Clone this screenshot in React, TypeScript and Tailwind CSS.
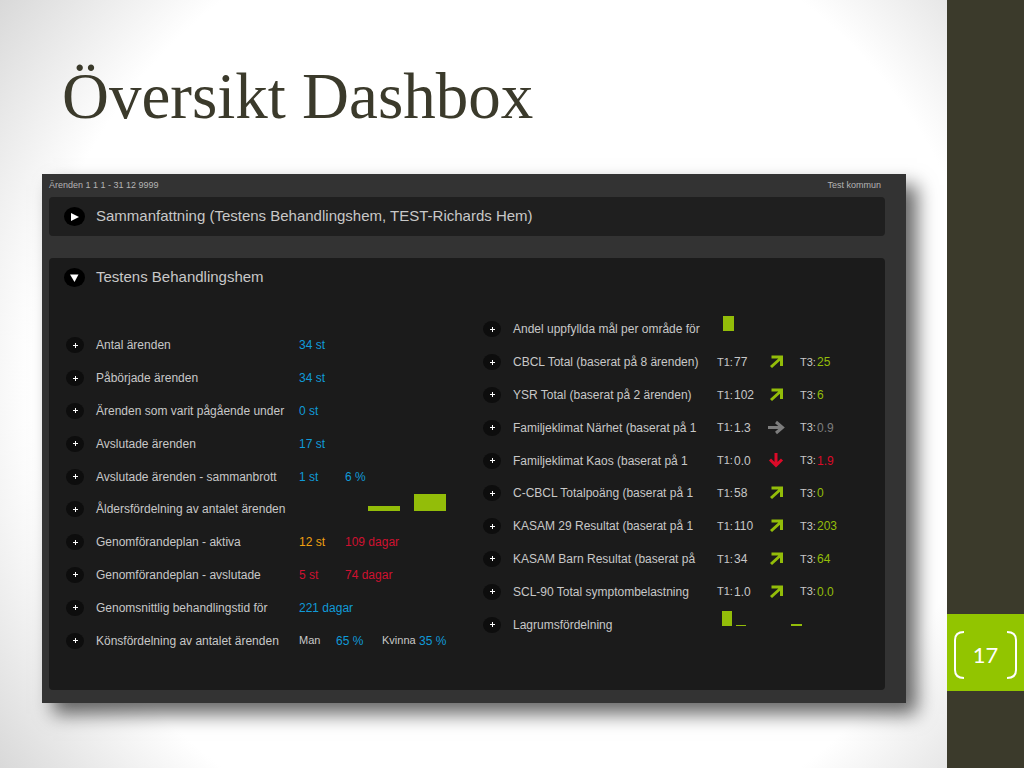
import { ReactNode } from "react";

type Value = {
  text: string;
  color: string;
};

type Stat = {
  label: string;
  values?: Value[];
  content?: ReactNode;
};

type Direction = "up" | "flat" | "down";

type Score = {
  label: string;
  t1?: string;
  t3?: string;
  direction?: Direction;
  content?: ReactNode;
};

const BLUE = "text-[#109ad8]";
const RED = "text-[#cf1130]";
const ORANGE = "text-[#f0a010]";

const stats: Stat[] = [
  { label: "Antal ärenden", values: [{ text: "34 st", color: BLUE }] },
  { label: "Påbörjade ärenden", values: [{ text: "34 st", color: BLUE }] },
  {
    label: "Ärenden som varit pågående under",
    values: [{ text: "0 st", color: BLUE }],
  },
  { label: "Avslutade ärenden", values: [{ text: "17 st", color: BLUE }] },
  {
    label: "Avslutade ärenden - sammanbrott",
    values: [
      { text: "1 st", color: BLUE },
      { text: "6 %", color: BLUE },
    ],
  },
  { label: "Åldersfördelning av antalet ärenden", content: <AgeChart /> },
  {
    label: "Genomförandeplan - aktiva",
    values: [
      { text: "12 st", color: ORANGE },
      { text: "109 dagar", color: RED },
    ],
  },
  {
    label: "Genomförandeplan - avslutade",
    values: [
      { text: "5 st", color: RED },
      { text: "74 dagar", color: RED },
    ],
  },
  {
    label: "Genomsnittlig behandlingstid för",
    values: [{ text: "221 dagar", color: BLUE }],
  },
  { label: "Könsfördelning av antalet ärenden", content: <GenderSplit /> },
];

const scores: Score[] = [
  { label: "Andel uppfyllda mål per område för", content: <GoalChart /> },
  { label: "CBCL Total (baserat på 8 ärenden)", t1: "77", t3: "25", direction: "up" },
  { label: "YSR Total (baserat på 2 ärenden)", t1: "102", t3: "6", direction: "up" },
  { label: "Familjeklimat Närhet (baserat på 1", t1: "1.3", t3: "0.9", direction: "flat" },
  { label: "Familjeklimat Kaos (baserat på 1", t1: "0.0", t3: "1.9", direction: "down" },
  { label: "C-CBCL Totalpoäng (baserat på 1", t1: "58", t3: "0", direction: "up" },
  { label: "KASAM 29 Resultat (baserat på 1", t1: "110", t3: "203", direction: "up" },
  { label: "KASAM Barn Resultat (baserat på", t1: "34", t3: "64", direction: "up" },
  { label: "SCL-90 Total symptombelastning", t1: "1.0", t3: "0.0", direction: "up" },
  { label: "Lagrumsfördelning", content: <LawChart /> },
];

const directionColor = {
  up: "text-[#93bd09]",
  flat: "text-[#7d7d7d]",
  down: "text-[#dc0a28]",
};

function AgeChart() {
  return (
    <svg className="ml-[69px] block" width="78" height="32" aria-hidden="true">
      <rect x="0" y="13" width="32" height="5" fill="#93bd09" />
      <rect x="46" y="1" width="32" height="17" fill="#93bd09" />
    </svg>
  );
}

function GoalChart() {
  return (
    <svg className="ml-[6px] block" width="12" height="32" aria-hidden="true">
      <rect x="0" y="3" width="11" height="15" fill="#93bd09" />
    </svg>
  );
}

function LawChart() {
  return (
    <svg className="ml-[5px] block" width="80" height="32" aria-hidden="true">
      <rect x="0" y="2" width="10" height="15" fill="#93bd09" />
      <rect x="14" y="16" width="10" height="1" fill="#93bd09" />
      <rect x="69" y="15" width="11" height="2" fill="#93bd09" />
    </svg>
  );
}

function GenderSplit() {
  return (
    <div className="flex items-center">
      <span className="w-[37px] text-[11px]">Man</span>
      <span className={`w-[46px] ${BLUE}`}>65 %</span>
      <span className="w-[37px] text-[11px]">Kvinna</span>
      <span className={BLUE}>35 %</span>
    </div>
  );
}

function TrendArrow({ direction }: { direction: Direction }) {
  return (
    <svg
      width="18"
      height="16"
      viewBox="0 0 18 16"
      fill="none"
      stroke="currentColor"
      strokeWidth="3"
      className={`block ${directionColor[direction]}`}
      aria-hidden="true"
    >
      {direction === "up" && <path d="M3 13 13 4M3.500 3H13.500V12" />}
      {direction === "flat" && <path d="M0 7.500h14M8 2 14.500 7.500 8 13" />}
      {direction === "down" && <path d="M8 0v12M2 6.500l6 6 6-6" />}
    </svg>
  );
}

function ExpandButton({ label }: { label: string }) {
  return (
    <button
      type="button"
      aria-label={`Visa ${label}`}
      className="flex h-4 w-[18px] items-center justify-center rounded-[50%] bg-[#0d0d0d]"
    >
      <svg width="5" height="5" viewBox="0 0 5 5" stroke="#fff" aria-hidden="true">
        <path d="M2.500 0v5M0 2.500h5" />
      </svg>
    </button>
  );
}

function SectionHeader({ title, open }: { title: string; open?: boolean }) {
  return (
    <button
      type="button"
      aria-expanded={!!open}
      className="flex h-[39px] items-center gap-[11px] pl-[15px] text-[15px] text-[#c8c8c8]"
    >
      <span className="flex h-[19px] w-[21px] items-center justify-center rounded-[50%] bg-black">
        <svg width="9" height="8" viewBox="0 0 9 8" fill="#fff" aria-hidden="true">
          {open ? <path d="M0 0.500h8.500L4.500 8z" /> : <path d="M1 0 9 4 1 8z" />}
        </svg>
      </span>
      {title}
    </button>
  );
}

function StatTable() {
  return (
    <table className="mt-8 h-[328px] w-full table-fixed text-left text-xs">
      <colgroup>
        <col className="w-[30px]" />
        <col className="w-[203px]" />
        <col className="w-[46px]" />
        <col />
      </colgroup>
      <tbody>
        {stats.map((stat) => (
          <tr key={stat.label} className="h-8">
            <td className="p-0">
              <ExpandButton label={stat.label} />
            </td>
            <th scope="row" className="p-0 font-normal whitespace-nowrap">
              {stat.label}
            </th>
            {stat.content && (
              <td colSpan={2} className="p-0">
                {stat.content}
              </td>
            )}
            {stat.values?.map((value, i) => (
              <td
                key={i}
                colSpan={stat.values?.length === 1 ? 2 : 1}
                className={`p-0 whitespace-nowrap ${value.color}`}
              >
                {value.text}
              </td>
            ))}
          </tr>
        ))}
      </tbody>
    </table>
  );
}

function ScoreTable() {
  return (
    <table className="mt-4 h-[328px] w-full table-fixed text-left text-xs">
      <colgroup>
        <col className="w-[30px]" />
        <col className="w-[204px]" />
        <col className="w-[51px]" />
        <col className="w-8" />
        <col />
      </colgroup>
      <tbody>
        {scores.map((score) => (
          <tr key={score.label} className="h-8">
            <td className="p-0">
              <ExpandButton label={score.label} />
            </td>
            <th scope="row" className="p-0 font-normal whitespace-nowrap">
              {score.label}
            </th>
            {score.content && (
              <td colSpan={3} className="p-0">
                {score.content}
              </td>
            )}
            {score.direction && (
              <>
                <td className="p-0">
                  <div className="flex items-center">
                    <span className="w-[17px] text-[11px]">T1:</span>
                    {score.t1}
                  </div>
                </td>
                <td className="p-0">
                  <TrendArrow direction={score.direction} />
                </td>
                <td className="p-0">
                  <div className="flex items-center">
                    <span className="w-[17px] text-[11px]">T3:</span>
                    <span className={directionColor[score.direction]}>{score.t3}</span>
                  </div>
                </td>
              </>
            )}
          </tr>
        ))}
      </tbody>
    </table>
  );
}

export default function App() {
  return (
    <div className="flex min-h-screen bg-white">
      <main className="min-w-0 flex-1 bg-[radial-gradient(circle_at_54%_50%,#ffffff_0,#ffffff_480px,#cacaca_700px)] pr-[41px] pb-16 pl-[42px]">
        <h1 className="pt-[60px] pl-5 font-['Liberation_Serif',serif] text-[65px] leading-[72px] text-[#3b3a2b]">
          Översikt Dashbox
        </h1>

        <div className="mt-[42px] bg-[#333333] pr-[21px] pb-[13px] pl-[7px] font-['Liberation_Sans',sans-serif] text-[#c8c8c8] shadow-[11px_11px_18px_rgba(0,0,0,0.6)]">
          <div className="flex h-[23px] items-center justify-between pr-1 text-[9px] text-[#b4b4b4]">
            <span>Ärenden 1 1 1 - 31 12 9999</span>
            <span>Test kommun</span>
          </div>

          <section className="rounded-sm bg-[#1f1f1f]">
            <SectionHeader title="Sammanfattning (Testens Behandlingshem, TEST-Richards Hem)" />
          </section>

          <section className="mt-[22px] rounded-sm bg-[#1b1b1b] pb-[33px]">
            <SectionHeader title="Testens Behandlingshem" open />
            <div className="grid grid-cols-2">
              <div className="pl-[17px]">
                <StatTable />
              </div>
              <div className="pl-4">
                <ScoreTable />
              </div>
            </div>
          </section>
        </div>
      </main>

      <aside className="flex w-[77px] shrink-0 flex-col justify-end bg-[#3b3a2b] pb-[77px]">
        <div className="flex h-[77px] items-center justify-between bg-[#92c500] px-[7px] pt-1 font-[Lato,sans-serif] text-[22px] text-white">
          <svg width="10" height="48" fill="none" stroke="#fff" strokeWidth="2" aria-hidden="true">
            <path d="M10 1C4 1 1 4 1 9v30c0 5 3 8 9 8" />
          </svg>
          17
          <svg width="10" height="48" fill="none" stroke="#fff" strokeWidth="2" aria-hidden="true">
            <path d="M0 1c6 0 9 3 9 8v30c0 5-3 8-9 8" />
          </svg>
        </div>
      </aside>
    </div>
  );
}
